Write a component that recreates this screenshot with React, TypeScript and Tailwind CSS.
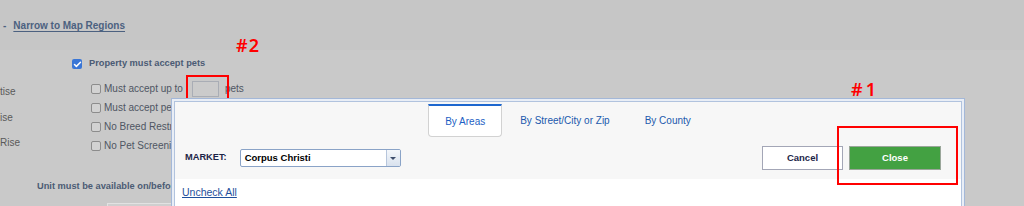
import { Check } from 'lucide-react';

const pageFont = { fontFamily: '"Liberation Sans", Arial, sans-serif' };
const noteFont = { fontFamily: '"Noto Sans", "DejaVu Sans", sans-serif' };

const PetRow = ({ children }: { children: React.ReactNode }) => (
  <div className="flex h-[19px] items-center text-[10px] text-[#4f5663]">
    <span className="mr-[3px] h-[10px] w-[10px] rounded-[2px] border border-[#8c8c8c] bg-[#d2d2d2]"></span>
    {children}
  </div>
);

const App = () => {
  return (
    <div className="relative h-[206px] w-[1024px] overflow-hidden bg-[#c9c9c9]" style={pageFont}>
      {/* Page behind the overlay */}
      <div className="flex h-[50px] items-start bg-[#c6c6c6] pl-[3px] pt-[19px] text-[10px] font-bold leading-[14px] text-[#4c6180]">
        <span className="mr-[7px]">-</span>
        <a className="underline underline-offset-2">Narrow to Map Regions</a>
      </div>

      <div className="flex">
        {/* cut-off labels on the left */}
        <div className="w-[72px] pt-[36px] text-[10px] leading-[12px] text-[#5a5a5a]">
          <div>tise</div>
          <div className="mt-[14px]">ise</div>
          <div className="mt-[13px]">Rise</div>
        </div>

        <div className="pt-[9px]">
          <div className="flex h-[10px] items-center text-[9.25px] font-bold text-[#4b5b74]">
            <span className="mr-[7px] flex h-[10px] w-[10px] items-center justify-center rounded-[2px] bg-[#3a76d6]">
              <Check className="h-[9px] w-[9px] text-white" strokeWidth={4} />
            </span>
            Property must accept pets
          </div>
          <div className="ml-[19px] mt-[10px]">
            <PetRow>
              Must accept up to
              <span className="ml-[9px] mr-[6px] h-[16px] w-[27px] border border-[#a9adb5] bg-[#cbcbcb]"></span>
              pets
            </PetRow>
            <PetRow>Must accept pets of any weight</PetRow>
            <PetRow>No Breed Restrictions</PetRow>
            <PetRow>No Pet Screening</PetRow>
          </div>
        </div>
      </div>

      <div className="mt-[25px] pl-[37px] text-[9.25px] font-bold leading-[12px] text-[#4b5b74]">
        Unit must be available on/before
      </div>
      <div className="ml-[107px] mt-[11px] h-[20px] w-[120px] border border-[#e2e2e2] bg-[#cfcfcf]"></div>

      {/* Annotation #2 */}
      <div className="absolute left-[236px] top-[32px] text-[18px] font-semibold leading-[26px] tracking-[1px] text-[#ff0000]" style={noteFont}>
        #2
      </div>
      <div className="absolute left-[186px] top-[75px] h-[25px] w-[43px] border-2 border-[#ff0000]"></div>

      {/* Dialog */}
      <div className="absolute left-[171px] top-[98px] w-[794px] border border-[#a4b8d8] bg-[#e9eef6] p-[2px]">
        <div className="border border-[#b1c3de] bg-white">
          <div className="bg-[#f7f7f7]">
            <div className="flex justify-center gap-[1px] pt-[2px] text-[10px] text-[#2159ad]">
              <div className="flex h-[33px] items-center rounded-b-[4px] border border-t-2 border-[#d2d2d2] border-t-[#1d67cf] bg-white px-[16px] text-[#1d5fc4]">
                By Areas
              </div>
              <div className="flex h-[33px] items-center px-[17px]">By Street/City or Zip</div>
              <div className="flex h-[33px] items-center px-[17px]">By County</div>
            </div>
            <div className="flex h-[42px] items-center pl-[10px] pr-[20px]">
              <span className="text-[9.25px] font-bold text-[#1c2548]">MARKET:</span>
              <div className="ml-[13px] flex h-[18px] w-[161px] items-center rounded-[2px] border border-[#8aa3c7] bg-white">
                <span className="flex-1 pl-[4px] text-[9.5px] font-bold text-black">Corpus Christi</span>
                <span className="flex h-[16px] w-[14px] items-center justify-center rounded-r-[1px] border-l border-[#b7c6dc] bg-gradient-to-b from-[#f4f7fb] to-[#d9e2ee]">
                  <span className="h-0 w-0 border-x-[3px] border-t-[3px] border-x-transparent border-t-[#3d4d6c]"></span>
                </span>
              </div>
              <div className="ml-auto flex gap-[6px]">
                <button className="h-[24px] w-[81px] border border-[#a3a6b6] bg-white text-[9.5px] font-bold text-[#1c2548]">
                  Cancel
                </button>
                <button className="h-[24px] w-[92px] border border-[#9aa69a] bg-[#43a142] text-[9.5px] font-bold text-white">
                  Close
                </button>
              </div>
            </div>
          </div>
          <div className="h-[40px] pl-[7px] pt-[7px] text-[10.5px] leading-[13px]">
            <a className="text-[#1f4f9c] underline">Uncheck All</a>
          </div>
        </div>
      </div>

      {/* Annotation #1 */}
      <div className="absolute left-[851px] top-[76px] text-[18px] font-semibold leading-[26px] tracking-[3px] text-[#ff0000]" style={noteFont}>
        #1
      </div>
      <div className="absolute left-[837px] top-[126px] h-[59px] w-[121px] border-2 border-[#ff0000]"></div>
    </div>
  );
};

export default App;
